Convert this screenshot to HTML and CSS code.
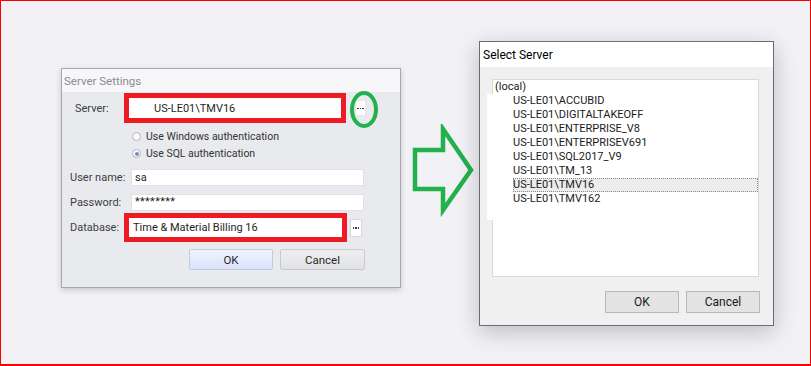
FILE: index.html
```html
<!DOCTYPE html>
<html lang="en">
<head>
<meta charset="utf-8">
<title>Server Settings</title>
<link rel="stylesheet" href="styles.css">
</head>
<body>
<div class="screen">

  <section class="dlg dlg-settings">
    <header class="dlg-title settings-title">Server Settings</header>
    <div class="settings-body">
      <div class="row row-server">
        <span class="lbl lbl-server">Server:</span>
        <div class="mark mark-server"><div class="field field-server">US-LE01\TMV16</div></div>
        <span class="dots dots-server"><i></i><i></i><i></i></span>
      </div>
      <div class="radios">
        <div class="radio"><span class="rb"></span>Use Windows authentication</div>
        <div class="radio"><span class="rb on"></span>Use SQL authentication</div>
      </div>
      <div class="row row-plain row-user">
        <span class="lbl lbl-wide">User name:</span>
        <div class="field field-plain">sa</div>
      </div>
      <div class="row row-plain row-pass">
        <span class="lbl lbl-wide">Password:</span>
        <div class="field field-plain field-pass">********</div>
      </div>
      <div class="row row-db">
        <span class="lbl lbl-db">Database:</span>
        <div class="mark mark-db"><div class="field field-db">Time &amp; Material Billing 16</div></div>
        <span class="dots dots-db"><i></i><i></i><i></i></span>
      </div>
      <div class="actions settings-actions">
        <span class="btn btn-primary">OK</span>
        <span class="btn btn-plain">Cancel</span>
      </div>
    </div>
    <span class="ring"></span>
  </section>

  <svg class="arrow" width="70" height="94" viewBox="0 0 70 94" aria-hidden="true">
    <path d="M5 26 H33 V5 L61 46 L33 86 V65 H5 Z" fill="none" stroke="#22b14c" stroke-width="4.5" stroke-linejoin="miter"/>
  </svg>

  <section class="dlg dlg-select">
    <header class="dlg-title select-title">Select Server</header>
    <div class="select-body">
      <span class="patch"></span>
      <ul class="list">
        <li class="item item-root">(local)</li>
        <li class="item">US-LE01\ACCUBID</li>
        <li class="item">US-LE01\DIGITALTAKEOFF</li>
        <li class="item">US-LE01\ENTERPRISE_V8</li>
        <li class="item">US-LE01\ENTERPRISEV691</li>
        <li class="item">US-LE01\SQL2017_V9</li>
        <li class="item">US-LE01\TM_13</li>
        <li class="item item-selected">US-LE01\TMV16</li>
        <li class="item">US-LE01\TMV162</li>
      </ul>
      <div class="actions select-actions">
        <span class="btn btn-win">OK</span>
        <span class="btn btn-win">Cancel</span>
      </div>
    </div>
  </section>

</div>
</body>
</html>
```

FILE: styles.css
```css
* { box-sizing: border-box; }

html, body {
  margin: 0;
  padding: 0;
}

body {
  width: 811px;
  height: 366px;
  overflow: hidden;
  font-family: Roboto, "Liberation Sans", sans-serif;
  font-size: 11px;
  color: #2b2b2b;
}

.screen {
  position: relative;
  width: 811px;
  height: 366px;
  background: #f2f1f6;
  border: 1px solid #ff0000;
  border-bottom-width: 2px;
}

/* ---------- dialogs ---------- */
.dlg {
  position: absolute;
  display: flex;
  flex-direction: column;
}

.dlg-title {
  display: flex;
  align-items: center;
  background: #ffffff;
  white-space: nowrap;
}

/* ---------- Server Settings ---------- */
.dlg-settings {
  left: 60px;
  top: 67px;
  width: 340px;
  height: 220px;
  border: 1px solid #a9a9ad;
  background: #e9eaee;
  box-shadow: 0 2px 6px rgba(0, 0, 0, 0.18);
}

.settings-title {
  height: 23px;
  padding-left: 2px;
  font-size: 11.5px;
  color: #8c8c8f;
  background: #f7f7f9;
}

.settings-body {
  flex: 1;
  display: flex;
  flex-direction: column;
  padding-top: 1px;
}

.row {
  display: flex;
  align-items: center;
}

.lbl {
  color: #3d3d40;
  white-space: nowrap;
  font-size: 11px;
}

.row-server {
  height: 30px;
  padding-left: 13px;
}

.lbl-server { width: 49px; }

.mark {
  border: 5px solid #ed1c24;
  display: flex;
}

.mark-server {
  width: 222px;
  height: 30px;
}

.field {
  background: #ffffff;
  display: flex;
  align-items: center;
  white-space: nowrap;
  color: #1f1f1f;
  font-size: 11px;
}

.field-server {
  flex: 1;
  padding-left: 25px;
}

.dots {
  display: flex;
  align-items: center;
  justify-content: center;
  gap: 1px;
  padding-top: 1px;
  background: #ffffff;
  border: 1px solid #d6d7db;
}

.dots i {
  display: block;
  width: 1.5px;
  height: 1.5px;
  background: #3a3a3a;
}

.dots-server {
  width: 11px;
  height: 16px;
  margin-left: 9px;
  border-color: #e4e5e9;
}

.ring {
  position: absolute;
  left: 288px;
  top: 22px;
  width: 28px;
  height: 37px;
  border: 4px solid #22b14c;
  border-radius: 50%;
}

.radios {
  margin-top: 5px;
  padding-left: 70px;
  display: flex;
  flex-direction: column;
}

.radio {
  height: 17px;
  display: flex;
  align-items: center;
  color: #333;
  font-size: 10.5px;
  white-space: nowrap;
}

.rb {
  width: 9px;
  height: 9px;
  border-radius: 50%;
  border: 1px solid #b2b3b8;
  background: #fbfbfc;
  margin-right: 5px;
  position: relative;
}

.rb.on::after {
  content: "";
  position: absolute;
  left: 1.5px;
  top: 1.5px;
  width: 4px;
  height: 4px;
  border-radius: 50%;
  background: #6f8fc8;
}

.row-plain {
  height: 17px;
  padding-left: 8px;
}

.row-user { margin-top: 7px; }
.row-pass { margin-top: 8px; }

.lbl-wide { width: 61px; }

.field-plain {
  width: 233px;
  height: 17px;
  border: 1px solid #e1e2e6;
  padding-left: 3px;
}

.field-pass {
  align-items: flex-start;
  letter-spacing: 0.3px;
}

.row-db {
  margin-top: 2px;
  height: 29px;
  padding-left: 8px;
}

.lbl-db { width: 54px; }

.mark-db {
  width: 223px;
  height: 29px;
}

.field-db {
  flex: 1;
  padding-left: 4px;
}

.dots-db {
  width: 12px;
  height: 18px;
  margin-left: 3px;
}

.actions {
  display: flex;
  justify-content: flex-end;
}

.settings-actions {
  margin-top: 7px;
  padding-right: 35px;
  gap: 7px;
}

.btn {
  display: flex;
  align-items: center;
  justify-content: center;
  font-size: 11.5px;
  color: #2a2a2a;
  white-space: nowrap;
}

.btn-primary {
  width: 84px;
  height: 21px;
  border: 1px solid #c3cbdc;
  border-radius: 2px;
  background: linear-gradient(#eef3fe, #d9e3fa);
}

.btn-plain {
  width: 85px;
  height: 21px;
  border: 1px solid #c9cace;
  border-radius: 2px;
  background: linear-gradient(#eeeef1, #e1e2e6);
}

/* ---------- arrow ---------- */
.arrow {
  position: absolute;
  left: 409px;
  top: 123px;
}

/* ---------- Select Server ---------- */
.dlg-select {
  left: 478px;
  top: 40px;
  width: 295px;
  height: 285px;
  border: 1px solid #6d6d6d;
  background: #f0f0f0;
  box-shadow: 0 6px 22px rgba(0, 0, 0, 0.22);
}

.select-title {
  height: 25px;
  padding-left: 3px;
  font-size: 12px;
  color: #000;
}

.select-body {
  flex: 1;
  position: relative;
  display: flex;
  flex-direction: column;
  padding: 12px 13px 0 12px;
}

.patch {
  position: absolute;
  left: 7px;
  top: 27px;
  width: 6px;
  height: 126px;
  background: #ffffff;
}

.list {
  margin: 0;
  padding: 0 0 0 1px;
  list-style: none;
  width: 267px;
  height: 198px;
  background: #ffffff;
  border: 1px solid #d9d9d9;
  font-size: 11px;
  color: #1a1a1a;
}

.item {
  height: 14px;
  line-height: 14px;
  padding-left: 19px;
  white-space: nowrap;
}

.item-root { padding-left: 1px; }

.item-selected {
  margin-left: 19px;
  padding-left: 0;
  background: #ececec;
  outline: 1px dotted #8a8a8a;
  outline-offset: -1px;
}

.select-actions {
  margin-top: 14px;
  gap: 7px;
}

.btn-win {
  width: 74px;
  height: 22px;
  border: 1px solid #b9b9b9;
  background: #e3e3e3;
  font-size: 12px;
  color: #1a1a1a;
}
```
